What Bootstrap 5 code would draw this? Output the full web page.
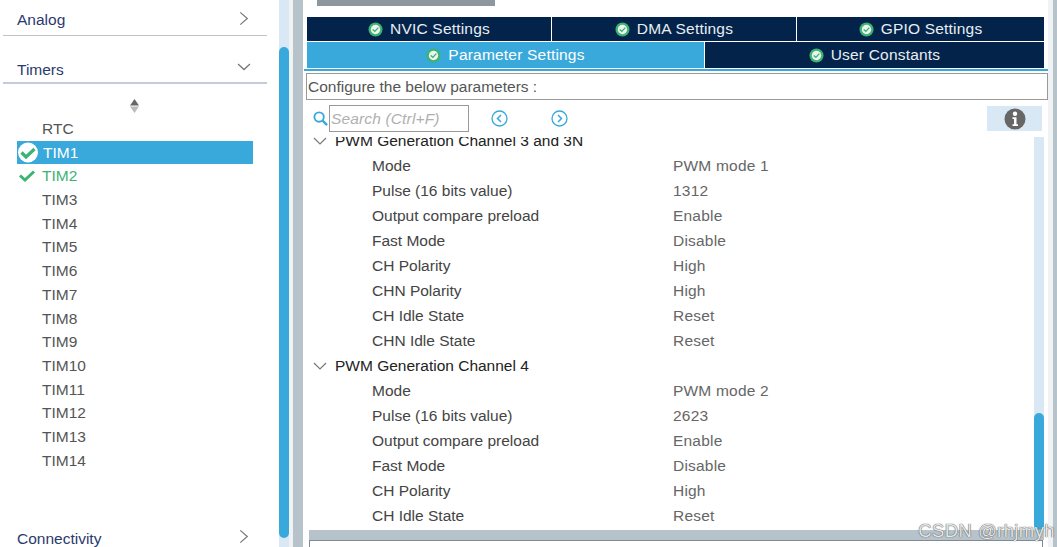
<!DOCTYPE html>
<html lang="en">
<head>
<meta charset="utf-8">
<title>Timers</title>
<link href="https://cdn.jsdelivr.net/npm/bootstrap@5.3.0/dist/css/bootstrap.min.css" rel="stylesheet">
<style>
html,body{height:547px;overflow:hidden;background:#fff}
body{font-family:"Liberation Sans",Arial,sans-serif;font-size:15.5px;line-height:1.2;color:#444}
.shell{height:547px;width:1057px}
.side{width:279px;flex:none;padding:0 12px 0 3px;overflow:hidden}
.cat{height:36px;margin-bottom:12px;padding:11px 18px 0 14px;color:#2b3a6e;border-bottom:1px solid #bcc3c9}
.cat-open{padding-top:13px;margin-bottom:0;border-bottom:2px solid #c3cbdd}
.cat-open svg{margin:2px -2px 0 0}
.cat-last{border:0;height:auto;margin:57px 0 0;padding-top:0}
.cat-last span{padding-top:1px}
.sorter{height:22px;padding-right:2px;margin-top:11px}
.tree{margin:0;padding:0 14px;list-style:none}
.tree li{height:23.7px;padding-left:25px;line-height:23.7px;color:#555;position:relative}
.tree li.on{background:#39a9dc;color:#fff;padding-left:26px}
.tree li.okay{color:#3cb371}
.tree svg{position:absolute}
.ic-on{left:0;top:1px}
.ic-ok{left:1px;top:3px}
.vbar{width:10px;flex:none;background:#d8e8f5;position:relative}
.thumb{position:absolute;left:0;right:0;background:#39a9dc;border-radius:5px}
.t1{top:47px;height:491px}
.t2{top:276px;height:117px}
.gut-a{width:4px;flex:none;background:#f1f2f3}
.gut-b{width:10px;flex:none;background:#b7c3ca}
.main{flex:1;min-width:0;padding-left:1px}
.gut-c{width:5px;flex:none;background:#f1f2f3}
.gut-d{width:4px;flex:none;background:#b7c3ca}
.stub{width:178px;height:6px;background:#8f979e;margin-left:13px}
.tabs{margin:11px 0 0 3px;width:737px}
.tabrow{height:24px;gap:1px;margin-bottom:1px}
.tabrow .tabx{padding-top:1px}
.tabrow.second{height:26px}
.tabrow.second .tabx{padding-top:0}
.tabx{flex:1 1 0;background:#03234b;color:#e8eef2;gap:7px;letter-spacing:.2px}
.tabx.slim{flex:0 0 244px}
.tabx.sel{background:#39a9dc;color:#fff;flex:0 0 397px}
.rule{height:2px;background:#39a9dc;width:746px;margin-bottom:2px}
.cfg{width:742px;height:27px;margin-left:2px;border:1px solid #999;padding:2px 1px;color:#555;line-height:21px}
.tools{height:37px;margin-left:2px;width:736px;padding:5px 0 5px 7px}
.find{width:140px;height:27px;margin-left:1px;border:1px solid #999;border-radius:0;padding:1px 2px 0 1px;font-style:italic;font-size:15.5px;line-height:24px;color:#555;background:#fff;letter-spacing:.15px}
.find::placeholder{color:#b0b0b0;opacity:1}
.roundb{margin-left:21px;margin-right:1px}
.roundc{margin-left:40px}
.infob{width:55px;height:25px;margin-left:auto;background:#d8e8f5}
.panel{height:393px;width:737px;margin-left:3px;position:relative;overflow:hidden}
.props{margin:-9px 0 0 0;padding:0}
.prow{height:25px;line-height:25px;color:#444;margin:0}
.prow .lab{width:366px;padding-left:65px;flex:none}
.prow .val{color:#666;letter-spacing:.2px}
.phead{height:25px;line-height:25px;color:#222;padding-left:28px;position:relative}
.phead svg{position:absolute;left:6px;top:9px}
.vb2{position:absolute;right:0;top:0;bottom:0;width:10px;background:#d8e8f5}
.hbar{height:10px;background:#b7c3ca;width:735px;margin-left:5px}
.footbox{width:734px;height:10px;margin-left:5px;border:1px solid #7f8a94;border-bottom:0;background:#fff}
.mark-wm{position:absolute;right:2px;bottom:6px;color:#e4e6e8;font-size:18.500px;letter-spacing:.4px;line-height:20px;text-shadow:0 0 1px #555,0 0 1px #555}
</style>
</head>
<body>
<div class="shell d-flex position-relative">
  <div class="side">
    <div class="cat d-flex justify-content-between align-items-start">
      <span>Analog</span>
      <svg width="10" height="15" viewBox="0 0 10 16"><path d="M1 1.500 8.500 8 1 14.500" fill="none" stroke="#777" stroke-width="1.300"/></svg>
    </div>
    <div class="cat cat-open d-flex justify-content-between align-items-start">
      <span>Timers</span>
      <svg width="14" height="8" viewBox="0 0 14 8"><path d="M1 1 7 6.500 13 1" fill="none" stroke="#777" stroke-width="1.300"/></svg>
    </div>
    <div class="sorter d-flex justify-content-center align-items-center">
      <svg width="11" height="16" viewBox="0 0 11 16"><path d="M5.500 1 10 7.500H1z" fill="#666"/><path d="M5.500 15 10 8.500H1z" fill="#bbb"/></svg>
    </div>
    <ul class="tree">
      <li>RTC</li>
      <li class="on"><svg class="ic-on" width="22" height="22" viewBox="0 0 22 22"><circle cx="11" cy="10.500" r="10" fill="#fff"/><path d="M4.500 10.500 9 15 17.500 7" fill="none" stroke="#3cb371" stroke-width="3.200"/></svg>TIM1</li>
      <li class="okay"><svg class="ic-ok" width="18" height="18" viewBox="0 0 18 18"><path d="M2 8.500 7 13 16 4.500" fill="none" stroke="#3cb371" stroke-width="3"/></svg>TIM2</li>
      <li>TIM3</li><li>TIM4</li><li>TIM5</li><li>TIM6</li><li>TIM7</li><li>TIM8</li><li>TIM9</li><li>TIM10</li><li>TIM11</li><li>TIM12</li><li>TIM13</li><li>TIM14</li>
    </ul>
    <div class="cat cat-last d-flex justify-content-between align-items-start">
      <span>Connectivity</span>
      <svg width="10" height="15" viewBox="0 0 10 16"><path d="M1 1.500 8.500 8 1 14.500" fill="none" stroke="#777" stroke-width="1.300"/></svg>
    </div>
  </div>
  <div class="vbar"><div class="thumb t1"></div></div>
  <div class="gut-a"></div>
  <div class="gut-b"></div>
  <div class="main">
    <div class="stub"></div>
    <div class="tabs">
      <div class="tabrow d-flex">
        <div class="tabx slim d-flex align-items-center justify-content-center"><svg width="15" height="15" viewBox="0 0 16 16"><circle cx="8" cy="8" r="7.500" fill="#3cb371"/><circle cx="8" cy="8" r="5" fill="#eef5f0"/><path d="M5 8 7.300 10 11 6" fill="none" stroke="#3cb371" stroke-width="1.500"/></svg><span>NVIC Settings</span></div>
        <div class="tabx slim d-flex align-items-center justify-content-center"><svg width="15" height="15" viewBox="0 0 16 16"><circle cx="8" cy="8" r="7.500" fill="#3cb371"/><circle cx="8" cy="8" r="5" fill="#eef5f0"/><path d="M5 8 7.300 10 11 6" fill="none" stroke="#3cb371" stroke-width="1.500"/></svg><span>DMA Settings</span></div>
        <div class="tabx d-flex align-items-center justify-content-center"><svg width="15" height="15" viewBox="0 0 16 16"><circle cx="8" cy="8" r="7.500" fill="#3cb371"/><circle cx="8" cy="8" r="5" fill="#eef5f0"/><path d="M5 8 7.300 10 11 6" fill="none" stroke="#3cb371" stroke-width="1.500"/></svg><span>GPIO Settings</span></div>
      </div>
      <div class="tabrow second d-flex">
        <div class="tabx sel d-flex align-items-center justify-content-center"><svg width="15" height="15" viewBox="0 0 16 16"><circle cx="8" cy="8" r="7.500" fill="#3cb371"/><circle cx="8" cy="8" r="5" fill="#eef5f0"/><path d="M5 8 7.300 10 11 6" fill="none" stroke="#3cb371" stroke-width="1.500"/></svg><span>Parameter Settings</span></div>
        <div class="tabx d-flex align-items-center justify-content-center"><svg width="15" height="15" viewBox="0 0 16 16"><circle cx="8" cy="8" r="7.500" fill="#3cb371"/><circle cx="8" cy="8" r="5" fill="#eef5f0"/><path d="M5 8 7.300 10 11 6" fill="none" stroke="#3cb371" stroke-width="1.500"/></svg><span>User Constants</span></div>
      </div>
    </div>
    <div class="rule"></div>
    <div class="cfg">Configure the below parameters :</div>
    <div class="tools d-flex align-items-center">
      <svg width="15" height="15" viewBox="0 0 16 16"><circle cx="6.500" cy="6.500" r="5" fill="none" stroke="#39a9dc" stroke-width="2"/><path d="M10 10 15 15" stroke="#39a9dc" stroke-width="2.500"/></svg>
      <input class="find" type="text" placeholder="Search (Ctrl+F)" aria-label="Search">
      <svg class="roundb" width="19" height="19" viewBox="0 0 19 19"><circle cx="9.500" cy="9.500" r="7.500" fill="none" stroke="#39a9dc" stroke-width="1.300"/><path d="M11 6 7.500 9.500 11 13" fill="none" stroke="#39a9dc" stroke-width="1.500"/></svg>
      <svg class="roundc" width="19" height="19" viewBox="0 0 19 19"><circle cx="9.500" cy="9.500" r="7.500" fill="none" stroke="#39a9dc" stroke-width="1.300"/><path d="M8 6 11.500 9.500 8 13" fill="none" stroke="#39a9dc" stroke-width="1.500"/></svg>
      <div class="infob d-flex align-items-center justify-content-center"><svg width="22" height="22" viewBox="0 0 22 22"><circle cx="11" cy="11" r="10.500" fill="#666"/><circle cx="11" cy="5.800" r="2.200" fill="#fff"/><path d="M8.500 9.200h4v7h1.500v1.800H8.500v-1.800H10V11H8.500z" fill="#fff"/></svg></div>
    </div>
    <div class="panel">
      <div class="props">
        <div class="phead"><svg width="14" height="8" viewBox="0 0 14 8"><path d="M1 1 7 7 13 1" fill="none" stroke="#777" stroke-width="1.200"/></svg>PWM Generation Channel 3 and 3N</div>
        <div class="prow d-flex"><span class="lab">Mode</span><span class="val">PWM mode 1</span></div>
        <div class="prow d-flex"><span class="lab">Pulse (16 bits value)</span><span class="val">1312</span></div>
        <div class="prow d-flex"><span class="lab">Output compare preload</span><span class="val">Enable</span></div>
        <div class="prow d-flex"><span class="lab">Fast Mode</span><span class="val">Disable</span></div>
        <div class="prow d-flex"><span class="lab">CH Polarity</span><span class="val">High</span></div>
        <div class="prow d-flex"><span class="lab">CHN Polarity</span><span class="val">High</span></div>
        <div class="prow d-flex"><span class="lab">CH Idle State</span><span class="val">Reset</span></div>
        <div class="prow d-flex"><span class="lab">CHN Idle State</span><span class="val">Reset</span></div>
        <div class="phead"><svg width="14" height="8" viewBox="0 0 14 8"><path d="M1 1 7 7 13 1" fill="none" stroke="#777" stroke-width="1.200"/></svg>PWM Generation Channel 4</div>
        <div class="prow d-flex"><span class="lab">Mode</span><span class="val">PWM mode 2</span></div>
        <div class="prow d-flex"><span class="lab">Pulse (16 bits value)</span><span class="val">2623</span></div>
        <div class="prow d-flex"><span class="lab">Output compare preload</span><span class="val">Enable</span></div>
        <div class="prow d-flex"><span class="lab">Fast Mode</span><span class="val">Disable</span></div>
        <div class="prow d-flex"><span class="lab">CH Polarity</span><span class="val">High</span></div>
        <div class="prow d-flex"><span class="lab">CH Idle State</span><span class="val">Reset</span></div>
      </div>
      <div class="vb2"><div class="thumb t2"></div></div>
    </div>
    <div class="hbar"></div>
    <div class="footbox"></div>
  </div>
  <div class="gut-c"></div>
  <div class="gut-d"></div>
  <div class="mark-wm">CSDN @rhjmyh</div>
</div>
</body>
</html>
